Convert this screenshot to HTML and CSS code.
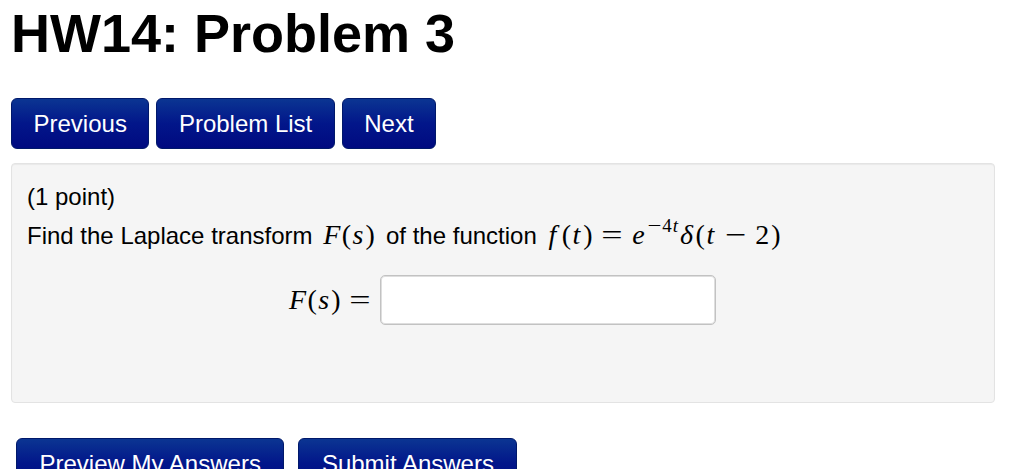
FILE: index.html
```html
<!DOCTYPE html>
<html>
<head>
<meta charset="utf-8">
<link rel="stylesheet" href="styles.css">
</head>
<body>
<div class="page">
  <h1 class="title">HW14: Problem 3</h1>
  <div class="nav">
    <button class="btn">Previous</button>
    <button class="btn">Problem List</button>
    <button class="btn">Next</button>
  </div>
  <div class="panel">
    <div class="points">(1 point)</div>
    <div class="question">Find the Laplace transform <span class="math inline"><i class="vF">F</i><span class="up pl">(</span><i class="vs">s</i><span class="up pr">)</span></span> of the function <span class="math inline"><i class="vf">f</i><span class="up pl">(</span><i class="vt">t</i><span class="up pr">)</span><span class="rel">=</span><i class="ve">e</i><sup class="sup"><span class="up sm">−</span><span class="up">4</span><i class="st">t</i></sup><i class="delta">δ</i><span class="up pl">(</span><i class="vt">t</i><span class="bin">−</span><span class="up">2</span><span class="up pr">)</span></span></div>
    <div class="answer-row">
      <span class="math label"><i class="vF">F</i><span class="up pl">(</span><i class="vs">s</i><span class="up pr">)</span><span class="rel rel-last">=</span></span>
      <input class="answer" type="text">
    </div>
  </div>
  <div class="actions">
    <button class="btn btn-wide">Preview My Answers</button>
    <button class="btn btn-wide">Submit Answers</button>
  </div>
</div>
</body>
</html>
```
FILE: styles.css
```css
html, body {
  margin: 0;
  padding: 0;
  background: #ffffff;
  overflow: hidden;
}
body {
  font-family: "Liberation Sans", Arial, sans-serif;
  color: #000;
}
.page {
  padding: 2px 29px 0 11px;
}
.title {
  margin: 0;
  font-size: 54px;
  line-height: 62px;
  font-weight: bold;
}
.nav {
  margin-top: 34px;
  display: flex;
  gap: 7px;
}
.btn {
  font-family: "Liberation Sans", Arial, sans-serif;
  font-size: 24px;
  line-height: 27px;
  padding: 11px 21.5px;
  color: #fff;
  background: linear-gradient(to bottom, #0b3592 0%, #02168a 50%, #000a80 100%);
  border: 1px solid #00186a;
  border-radius: 6px;
  cursor: pointer;
}
.btn-wide {
  padding: 11px 22.5px;
}
.panel {
  margin-top: 14px;
  background: #f5f5f5;
  border: 1px solid #e3e3e3;
  border-radius: 4px;
  box-shadow: inset 0 1px 1px rgba(0,0,0,0.05);
  padding: 16px 15px 15px 15px;
  font-size: 24px;
}
.points {
  line-height: 34px;
}
.question {
  margin-top: 4px;
  line-height: 34px;
}
.math {
  font-family: "Liberation Serif", "Times New Roman", serif;
  font-size: 28px;
  white-space: nowrap;
}
.inline {
  margin: 0 3px 0 3px;
}
.math i {
  font-style: italic;
}
.math .up {
  font-style: normal;
}
.pl {
  margin: 0 1.5px;
}
.pr {
  margin: 0 1.5px 0 2px;
}
.vF {
  margin-left: 1px;
}
.vf {
  margin: 0 4px 0 2px;
}
.vt {
  margin-right: 1px;
}
.ve {
  margin-left: 1px;
}
.rel, .bin {
  display: inline-block;
  font-style: normal;
  width: 20px;
  text-align: center;
  transform: scaleX(1.35);
}
.rel {
  margin: 0 9px 0 8px;
}
.rel-last {
  margin-right: 10px;
}
.bin {
  margin: 0 9px 0 11px;
}
.sup {
  font-size: 19px;
  vertical-align: 12px;
  line-height: 0;
  margin-left: 3px;
  margin-right: 2px;
}
.sm {
  display: inline-block;
  transform: scaleX(1.3);
  margin: 0 3px 0 1px;
}
.st {
  margin-left: 1px;
}
.delta {
  margin-right: 1px;
}
.answer-row {
  margin-top: 22px;
  display: flex;
  justify-content: center;
  align-items: center;
  margin-bottom: 62px;
  padding-right: 2px;
}
.label {
  line-height: 34px;
}
.answer {
  width: 336px;
  height: 50px;
  box-sizing: border-box;
  border: 1px solid #c2c2c2;
  border-radius: 5px;
  background: #fff;
  box-shadow: inset 0 0 0 1px #dedede;
}
.actions {
  margin-top: 35px;
  margin-left: 5px;
  display: flex;
  gap: 14px;
}
```
